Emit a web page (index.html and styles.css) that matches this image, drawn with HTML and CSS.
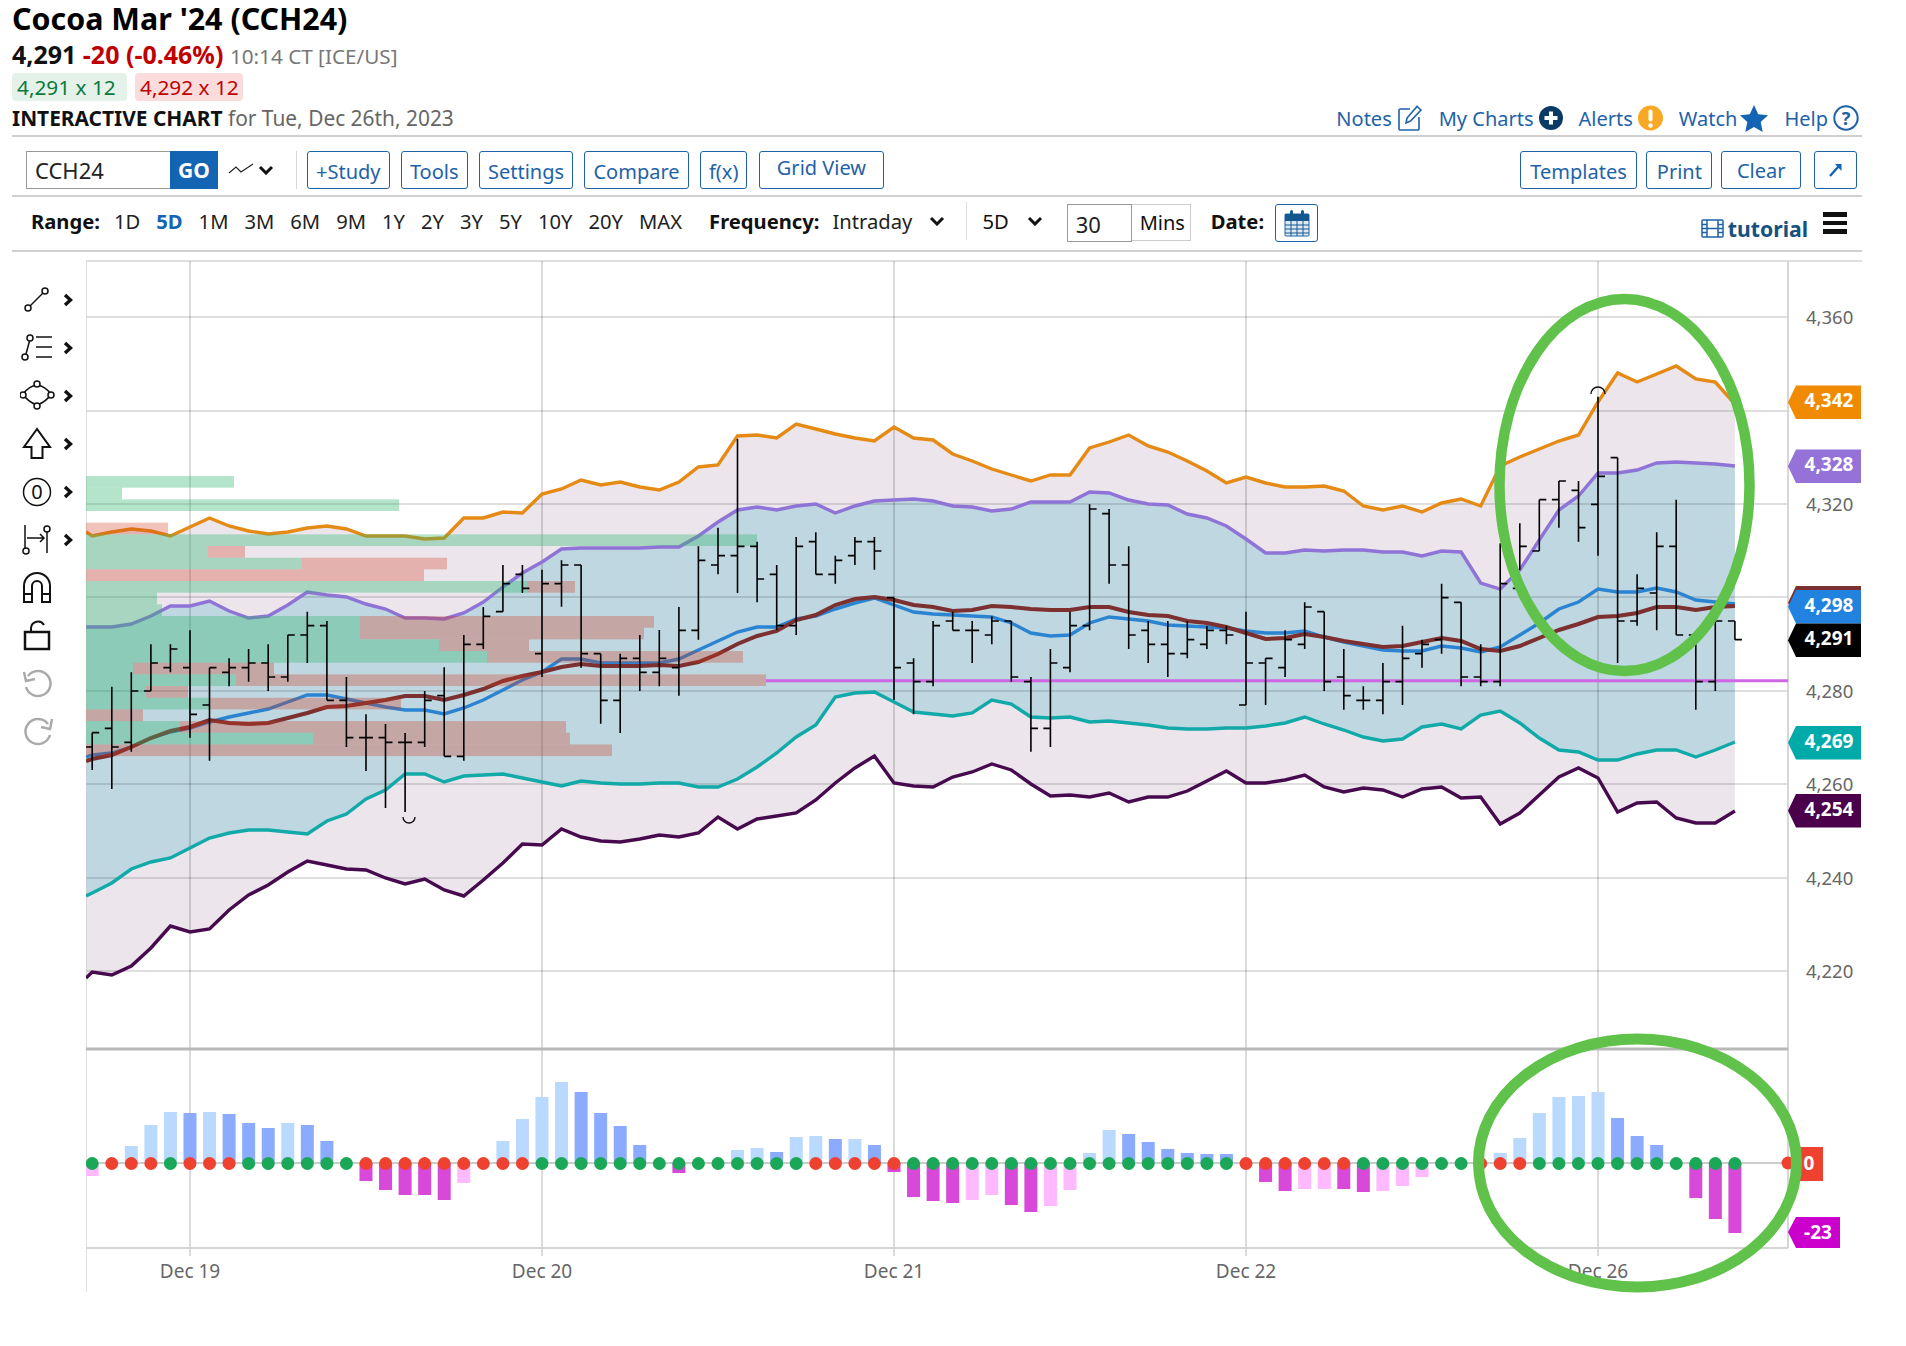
FILE: index.html
```html
<!DOCTYPE html>
<html lang="en">
<head>
    <meta charset="UTF-8">
    <title>Cocoa Mar '24 (CCH24)</title>
    <link rel="stylesheet" href="styles.css">
</head>
<body>

<div class="quote-head">
    <h1 class="symbol-title">Cocoa Mar '24 (CCH24)</h1>
    <div class="last-line">
        <b>4,291</b> <b class="down">-20 (-0.46%)</b> <span class="muted">10:14 CT [ICE/US]</span>
    </div>
    <div class="bid-ask">
        <span class="pill pill-bid">4,291 x 12</span>
        <span class="pill pill-ask">4,292 x 12</span>
    </div>
</div>

<div class="title-row">
    <div class="chart-title"><b>INTERACTIVE CHART</b> <span class="muted-dark">for Tue, Dec 26th, 2023</span></div>
    <div class="quick-links">
        <a class="quick-link">Notes
            <svg width="26" height="26" viewBox="0 0 26 26" fill="none" stroke="#1e62a8" stroke-width="1.6"><path d="M13 4H3.5A1.5 1.5 0 0 0 2 5.5v18A1.5 1.5 0 0 0 3.500 25h17a1.500 1.500 0 0 0 1.500-1.500V12"/><path d="M9 18l1-5L20 1.500l4 3.500-10.500 11z"/></svg>
        </a>
        <a class="quick-link">My Charts
            <svg width="24" height="24" viewBox="0 0 24 24"><circle cx="12" cy="12" r="12" fill="#0b3a66"/><path d="M12 5.500v13M5.500 12h13" stroke="#fff" stroke-width="4"/></svg>
        </a>
        <a class="quick-link">Alerts
            <svg width="25" height="26" viewBox="0 0 25 26"><circle cx="12.500" cy="13" r="12.500" fill="#f9a825"/><rect x="10.500" y="4.500" width="4" height="12" rx="2" fill="#fff"/><circle cx="12.500" cy="20.500" r="2.200" fill="#fff"/></svg>
        </a>
        <a class="quick-link quick-watch">Watch
            <svg width="28" height="27" viewBox="0 0 28 27"><path d="M14 0l4.200 9.300 9.800 1-7.300 6.700 2 10L14 22l-8.700 5 2-10L0 10.300l9.800-1z" fill="#1464b4"/></svg>
        </a>
        <a class="quick-link">Help
            <svg width="26" height="26" viewBox="0 0 26 26"><circle cx="13" cy="13" r="11.700" fill="none" stroke="#1e62a8" stroke-width="2"/><text class="help-mark" x="13" y="19.500">?</text></svg>
        </a>
    </div>
</div>

<div class="tool-row">
    <div class="symbol-box">
        <input class="symbol-input" type="text" value="CCH24">
        <button class="go-button">GO</button>
    </div>
    <div class="chart-type">
        <svg width="27" height="14" viewBox="0 0 27 14" fill="none" stroke="#222" stroke-width="1.200"><path d="M1 10l7-6 5 5L25 1"/></svg>
        <svg class="chevron" width="16" height="10" viewBox="0 0 16 10"><path d="M2 2l6 6 6-6"/></svg>
    </div>
    <div class="tool-sep"></div>
    <button class="tool-button">+Study</button>
    <button class="tool-button">Tools</button>
    <button class="tool-button">Settings</button>
    <button class="tool-button">Compare</button>
    <button class="tool-button">f(x)</button>
    <button class="tool-button grid-view">Grid View</button>
    <div class="tool-spacer"></div>
    <button class="tool-button tool-right">Templates</button>
    <button class="tool-button tool-right">Print</button>
    <button class="tool-button tool-clear">Clear</button>
    <button class="tool-button tool-expand">
        <svg width="17" height="17" viewBox="0 0 17 17"><path d="M3 15L11.500 5.500" fill="none" stroke="#1464b4" stroke-width="2.400"/><path d="M8 3h6.500v7z" fill="#1464b4"/></svg>
    </button>
</div>

<div class="range-row">
    <b class="range-label">Range:</b>
    <div class="range-items">
        <a>1D</a><a class="active">5D</a><a>1M</a><a>3M</a><a>6M</a><a>9M</a><a>1Y</a><a>2Y</a><a>3Y</a><a>5Y</a><a>10Y</a><a>20Y</a><a>MAX</a>
    </div>
    <b class="freq-label">Frequency:</b>
    <span class="freq-value">Intraday</span>
    <svg class="chevron freq-chevron" width="16" height="10" viewBox="0 0 16 10"><path d="M2 2l6 6 6-6"/></svg>
    <div class="range-sep"></div>
    <span class="freq-days">5D</span>
    <svg class="chevron days-chevron" width="16" height="10" viewBox="0 0 16 10"><path d="M2 2l6 6 6-6"/></svg>
    <input class="mins-input" type="text" value="30">
    <span class="mins-unit">Mins</span>
    <b class="date-label">Date:</b>
    <button class="date-button">
        <svg width="26" height="28" viewBox="0 0 26 28"><rect x="1" y="5" width="24" height="22" rx="1" fill="#dfe9f3" stroke="#1e62a8" stroke-width="1"/><rect x="1" y="5" width="24" height="7" fill="#14588f"/><rect x="6" y="1" width="3" height="7" rx="1.500" fill="#14588f"/><rect x="17" y="1" width="3" height="7" rx="1.500" fill="#14588f"/><path d="M1 16h24M1 20h24M1 24h24M7 12v15M13 12v15M19 12v15" stroke="#14588f" stroke-width="1"/></svg>
    </button>
    <div class="tool-spacer"></div>
    <a class="tutorial">
        <svg width="23" height="19" viewBox="0 0 23 19" fill="none" stroke="#1e62a8" stroke-width="1.500"><rect x="1" y="1" width="21" height="17" rx="1"/><path d="M6 1v17M17 1v17M1 5.500h5M1 9.500h5M1 13.500h5M17 5.500h5M17 9.500h5M17 13.500h5M6 9.500h11"/></svg>
        tutorial
    </a>
    <div class="hamburger"><i></i><i></i><i></i></div>
</div>

<div class="chart-area">
    <div class="draw-tools">
        <div class="draw-tool">
            <svg width="40" height="40" viewBox="0 0 40 40" fill="none" stroke="#111" stroke-width="1.500"><circle cx="8" cy="28" r="3"/><circle cx="25" cy="11" r="3"/><path d="M10 26l13-13"/></svg>
            <svg class="caret" width="10" height="14" viewBox="0 0 10 14"><path d="M2 2l5.500 5-5.500 5"/></svg>
        </div>
        <div class="draw-tool">
            <svg width="40" height="40" viewBox="0 0 40 40" fill="none" stroke="#111" stroke-width="1.500"><circle cx="5" cy="29" r="3"/><circle cx="10" cy="10" r="3"/><path d="M6 26l3.500-13M16 9h16M16 19h16M16 29h16"/></svg>
            <svg class="caret" width="10" height="14" viewBox="0 0 10 14"><path d="M2 2l5.500 5-5.500 5"/></svg>
        </div>
        <div class="draw-tool">
            <svg width="40" height="40" viewBox="0 0 40 40" fill="none" stroke="#111" stroke-width="1.500"><path d="M17 9c-6 1-11 5-14 9 3 5 8 9 14 11 6-2 11-6 14-11-3-4-8-8-14-9z"/><circle cx="17" cy="8" r="3" fill="#fff"/><circle cx="3" cy="19" r="3" fill="#fff"/><circle cx="31" cy="19" r="3" fill="#fff"/><circle cx="17" cy="30" r="3" fill="#fff"/></svg>
            <svg class="caret" width="10" height="14" viewBox="0 0 10 14"><path d="M2 2l5.500 5-5.500 5"/></svg>
        </div>
        <div class="draw-tool">
            <svg width="40" height="40" viewBox="0 0 40 40" fill="none" stroke="#111" stroke-width="2"><path d="M17 5L4 23h7.500v11h11V23H30z"/></svg>
            <svg class="caret" width="10" height="14" viewBox="0 0 10 14"><path d="M2 2l5.500 5-5.500 5"/></svg>
        </div>
        <div class="draw-tool">
            <svg width="40" height="40" viewBox="0 0 40 40" fill="none" stroke="#111" stroke-width="1.500"><circle cx="17" cy="20" r="13.500"/><text class="zero-mark" x="17" y="27">0</text></svg>
            <svg class="caret" width="10" height="14" viewBox="0 0 10 14"><path d="M2 2l5.500 5-5.500 5"/></svg>
        </div>
        <div class="draw-tool">
            <svg width="40" height="40" viewBox="0 0 40 40" fill="none" stroke="#111" stroke-width="1.500"><path d="M5 5v24M27 12v21M7 18h17M20 14l4 4-4 4"/><circle cx="6" cy="31" r="3"/><circle cx="27" cy="9" r="3"/></svg>
            <svg class="caret" width="10" height="14" viewBox="0 0 10 14"><path d="M2 2l5.500 5-5.500 5"/></svg>
        </div>
        <div class="draw-tool">
            <svg width="40" height="40" viewBox="0 0 40 40" fill="none" stroke="#111" stroke-width="2"><path d="M4 34V18a13 13 0 0 1 26 0v16h-8V18a5 5 0 0 0-10 0v16zM4 26h8M22 26h8"/></svg>
        </div>
        <div class="draw-tool">
            <svg width="40" height="40" viewBox="0 0 40 40" fill="none" stroke="#111" stroke-width="2"><rect x="5" y="16" width="24" height="17" stroke-width="2.500"/><path d="M11 16v-4a7 7 0 0 1 13-3"/></svg>
        </div>
        <div class="draw-tool">
            <svg width="40" height="40" viewBox="0 0 40 40" fill="none" stroke="#aaa" stroke-width="2.500"><path d="M8 12a12.500 12.500 0 1 1-2 11"/><path d="M4 8l2 9 9-2"/></svg>
        </div>
        <div class="draw-tool">
            <svg width="40" height="40" viewBox="0 0 40 40" fill="none" stroke="#aaa" stroke-width="2.500"><path d="M28 12a12.500 12.500 0 1 0 2 11"/><path d="M32 7l-2 10-9-2"/></svg>
        </div>
    </div>
    <svg class="chart" id="chart" width="1820" height="1086" viewBox="86 260 1820 1086"></svg>
</div>

<script src="chart.js"></script>
</body>
</html>
```

FILE: styles.css
```css
* {
    box-sizing: border-box;
}

body {
    margin: 0;
    font-family: "Noto Sans", "Open Sans", sans-serif;
    font-size: 20px;
    color: #111;
    background: #fff;
    width: 1906px;
    height: 1346px;
    overflow: hidden;
}

.quote-head {
    padding-left: 12px;
    height: 101px;
}

.symbol-title {
    margin: 0;
    height: 38px;
    font-size: 30.4px;
    line-height: 38px;
    font-weight: 700;
    color: #000;
}

.last-line {
    height: 35px;
    line-height: 32px;
    font-size: 25px;
    white-space: nowrap;
}

.last-line b {
    color: #111;
}

.last-line b.down {
    color: #c00000;
}

.muted {
    font-size: 20.7px;
    color: #777;
}

.muted-dark {
    color: #666;
}

.bid-ask {
    display: flex;
    gap: 8px;
}

.pill {
    display: block;
    height: 28px;
    line-height: 29px;
    padding: 0 4px 0 5px;
    border-radius: 4px;
    font-size: 20.8px;
}

.pill-bid {
    width: 115px;
    background: #e4f2ea;
    color: #0c7a3c;
}

.pill-ask {
    background: #fadcdc;
    color: #c00000;
}

.title-row {
    display: flex;
    justify-content: space-between;
    align-items: flex-end;
    height: 36px;
    margin: 0 44px 0 12px;
    padding-bottom: 3px;
    border-bottom: 2px solid #d0d0d0;
    font-size: 20.9px;
}

.chart-title {
    line-height: 28px;
    white-space: nowrap;
}

.quick-links {
    display: flex;
    gap: 16px;
    margin-right: 3px;
    font-size: 20px;
}

.quick-link {
    display: flex;
    align-items: center;
    gap: 5px;
    color: #1e62a8;
    height: 28px;
    white-space: nowrap;
}

.quick-watch {
    gap: 3px;
}

.help-mark {
    font: 700 18px "Noto Sans", sans-serif;
    fill: #1e62a8;
    text-anchor: middle;
}

.tool-row {
    display: flex;
    align-items: center;
    height: 60px;
    margin: 0 44px 0 12px;
    padding: 14px 5px 6px 14px;
    border-bottom: 2px solid #d0d0d0;
}

.symbol-box {
    display: flex;
    height: 38px;
}

.symbol-input {
    width: 144px;
    height: 38px;
    padding: 0 8px;
    border: 1px solid #999;
    border-right: none;
    font: 22px "Noto Sans", sans-serif;
    color: #222;
}

.go-button {
    width: 48px;
    height: 38px;
    padding: 0;
    border: none;
    background: #1464b4;
    color: #fff;
    font: 700 21px "Noto Sans", sans-serif;
}

.chart-type {
    display: flex;
    align-items: center;
    gap: 3px;
    width: 78px;
    padding-left: 10px;
}

.chevron path {
    fill: none;
    stroke: #111;
    stroke-width: 3;
}

.tool-sep {
    width: 1px;
    height: 38px;
    background: #d8d8d8;
    margin-right: 10px;
}

.tool-button {
    height: 38px;
    margin-right: 11.4px;
    padding: 2px 8px 0;
    border: 1px solid #1e62a8;
    border-radius: 3px;
    background: #fff;
    color: #1e62a8;
    font: 20px "Noto Sans", sans-serif;
}

.grid-view {
    padding: 0 17px 5px;
}

.tool-right {
    padding: 2px 9.5px 0;
    margin-right: 9px;
}

.tool-clear {
    padding: 0 14.5px;
    margin-right: 13px;
}

.tool-expand {
    width: 43px;
    margin-right: 0;
    padding: 0;
}

.tool-spacer {
    flex: 1;
}

.range-row {
    display: flex;
    align-items: center;
    height: 55px;
    margin: 0 44px 0 12px;
    padding: 0 15px 5px 19px;
    border-bottom: 2px solid #d0d0d0;
    white-space: nowrap;
    font-size: 20.2px;
}

.range-items {
    display: flex;
    gap: 16px;
    margin-left: 14px;
    color: #222;
}

.range-items a.active {
    color: #1464b4;
    font-weight: 700;
}

.freq-label {
    margin-left: 27px;
}

.freq-value {
    margin-left: 13px;
    color: #222;
}

.freq-chevron {
    margin-left: 17px;
}

.range-sep {
    width: 1px;
    height: 38px;
    margin-left: 21px;
    background: #e0e0e0;
}

.freq-days {
    margin-left: 15px;
}

.days-chevron {
    margin-left: 18px;
}

.mins-input {
    width: 65px;
    height: 38px;
    margin-left: 24px;
    margin-top: 3px;
    padding: 2px 8px 0;
    border: 1px solid #999;
    font: 22px "Noto Sans", sans-serif;
    color: #222;
}

.mins-unit {
    width: 59px;
    height: 37px;
    line-height: 35px;
    margin-top: 3px;
    padding-left: 8px;
    border: 1px solid #ccc;
    border-left: none;
    font-size: 20px;
}

.date-label {
    margin-left: 20px;
}

.date-button {
    width: 43px;
    height: 38px;
    margin-left: 11px;
    margin-top: 3px;
    padding: 4px 0 0;
    border: 1px solid #1e62a8;
    border-radius: 3px;
    background: #fff;
}

.tutorial {
    display: flex;
    align-items: center;
    gap: 4px;
    margin-top: 14px;
    font-size: 21.2px;
    font-weight: 700;
    color: #14527f;
}

.hamburger {
    display: flex;
    flex-direction: column;
    gap: 4px;
    margin-left: 15px;
    margin-top: 4px;
}

.hamburger i {
    display: block;
    width: 24px;
    height: 4.5px;
    background: #111;
}

.chart-area {
    display: flex;
    padding-top: 8px;
}

.draw-tools {
    width: 86px;
    padding: 16px 0 0 20px;
}

.draw-tool {
    display: flex;
    align-items: center;
    height: 48px;
}

.caret {
    margin-left: 3px;
}

.caret path {
    fill: none;
    stroke: #111;
    stroke-width: 3.4;
}

.zero-mark {
    font: 20px "Noto Sans", sans-serif;
    fill: #111;
    stroke: none;
    text-anchor: middle;
}

.chart {
    display: block;
}

.axis-label {
    font: 18.5px "Noto Sans", sans-serif;
    fill: #666;
}

.price-tag {
    font: 700 19px "Noto Sans", sans-serif;
    fill: #fff;
    text-anchor: middle;
}

.date-tick {
    font: 19px "Noto Sans", sans-serif;
    fill: #666;
    text-anchor: middle;
}
```

FILE: chart.js
```js
const svg = document.getElementById('chart');
const NS = 'http://www.w3.org/2000/svg';

// x of bar i: 18 half hour bars a day, 352px per day
const barX = i => 92.2 + 19.556 * i;

const plotLeft = 86;
const plotRight = 1788;
const zeroY = 1163;

// y of every line per bar, in page pixels
const orange = [536,532,529,531,536,527,518,526,531,534,532,528,526,529,536,536,536,539,538,518,518,512,513,494,489,480,485,482,487,490,
    482,467,465,436,435,438,424,429,434,438,441,427,438,440,454,461,469,475,481,475,475,448,442,435,446,452,461,471,483,477,483,487,
    487,486,491,506,510,506,512,503,499,506,466,457,449,441,435,402,373,382,374,366,379,382,404];
const purple = [627,627,624,616,606,606,601,611,618,616,605,592,595,597,604,609,618,618,619,613,602,587,573,562,549,548,548,548,548,547,
    547,536,522,510,507,510,506,504,513,506,501,500,499,501,506,507,511,509,502,502,502,492,493,500,504,505,514,518,526,539,553,553,
    550,551,550,550,552,552,556,551,552,583,589,570,540,510,496,473,473,470,463,462,463,464,466];
const blue = [755,753,747,738,732,728,722,717,713,709,702,695,695,699,703,707,710,710,714,708,700,690,680,672,659,659,663,663,663,663,
    659,650,641,632,627,627,619,616,609,603,598,605,612,614,615,616,617,623,633,636,635,623,617,619,621,625,626,627,628,631,633,633,
    631,637,642,646,650,651,651,646,648,652,647,635,623,609,602,589,592,592,588,592,600,602,604];
const maroon = [759,755,747,738,731,727,720,723,724,723,718,713,707,706,703,700,696,696,700,695,689,681,676,672,667,664,666,666,666,665,
    666,662,654,644,636,631,620,615,605,599,597,600,605,607,611,610,606,607,609,610,610,607,607,612,615,616,621,623,627,633,639,638,
    634,637,641,644,647,646,642,638,641,649,651,646,638,630,624,617,616,613,607,607,610,607,606];
const teal = [893,883,869,862,858,848,838,833,830,830,832,834,821,814,799,790,774,774,782,776,775,774,778,782,786,781,783,784,784,783,783,787,787,779,
    767,753,737,725,697,693,692,702,712,714,716,713,700,704,717,718,717,722,721,723,725,728,729,729,728,728,726,723,
    717,724,730,737,741,739,727,724,729,715,711,723,738,750,752,760,760,754,750,750,757,750,742];
const plum = [972,975,966,948,926,932,929,910,895,885,872,861,865,869,870,878,884,879,890,896,880,863,844,845,829,837,841,842,839,835,837,833,817,829,819,816,813,800,783,768,756,783,786,787,
    777,772,764,770,784,796,795,797,793,802,797,797,791,781,771,783,783,780,775,787,792,788,790,797,789,787,798,797,824,813,795,777,768,778,812,803,802,818,823,823,811];

// line value where it meets the left edge of the plot
const startY = { orange: 532, purple: 627, blue: 757, maroon: 761, teal: 896, plum: 978 };

// [high, low, open, close], measured in thirds of a pixel below the plot top
const bars = [
    [1418,1530,1461,1418],[1280,1587,1405,1461],[1237,1475,1447,1293],[1153,1293,1293,1209],[1153,1237,1223,1167],
    [1111,1433,1223,1363],[1223,1502,1335,1223],[1195,1279,1237,1223],[1167,1265,1223,1209],[1153,1293,1209,1251],
    [1125,1265,1251,1125],[1055,1209,1125,1097],[1083,1321,1097,1321],[1251,1461,1321,1433],[1363,1533,1433,1433],
    [1392,1644,1433,1447],[1419,1656,1447,1447],[1293,1461,1447,1321],[1222,1489,1307,1489],[1125,1502,1489,1153],
    [1041,1167,1153,1069],[915,1055,1055,971],[915,999,943,985],[929,1251,1181,971],[901,1040,971,915],
    [915,1223,915,1181],[1181,1391,1181,1321],[1181,1419,1321,1195],[1125,1293,1195,1237],[1110,1279,1237,1195],
    [1041,1307,1223,1111],[859,1139,1111,901],[803,943,915,887],[537,999,887,859],[845,1027,859,957],
    [915,1111,943,1097],[831,1125,1097,859],[817,943,845,943],[887,971,943,901],[831,915,887,845],
    [831,929,845,873],[1013,1320,1013,1223],[1195,1363,1209,1265],[1083,1279,1265,1097],[1055,1111,1083,1111],
    [1083,1209,1111,1111],[1069,1153,1125,1083],[1083,1265,1083,1251],[1251,1475,1265,1405],[1167,1461,1405,1209],
    [1055,1237,1223,1097],[733,1111,1097,747],[747,971,761,915],[859,1167,915,1125],[1083,1209,1111,1153],
    [1083,1251,1153,1181],[1083,1195,1181,1139],[1097,1167,1153,1111],[1097,1153,1111,1125],[1055,1335,1335,1209],
    [1195,1335,1209,1195],[1111,1251,1223,1139],[1027,1167,1153,1041],[1055,1293,1055,1265],[1167,1349,1251,1307],
    [1279,1349,1321,1321],[1209,1363,1321,1265],[1097,1335,1265,1195],[1139,1223,1181,1153],[971,1181,1139,1013],
    [1027,1279,1027,1251],[1153,1279,1251,1265],[850,1279,1265,971],[790,930,985,859],[719,873,873,719],
    [663,803,719,663],[663,845,691,803],[410,887,733,649],[593,1209,593,1083],[943,1097,1083,985],
    [817,1111,999,859],[719,1125,859,1125],[1125,1349,1125,1265],[1083,1293,1265,1083],[1083,1139,1083,1139]
];
const barY = v => 260 + v / 3;

// volume profile rows from the left edge: [row, green end, red end]
const profile = [
    [0,234,0],[1,122,0],[2,399,0],[4,86,168],[5,757,0],[6,208,245],[7,302,447],[8,86,424],[9,527,575],
    [10,157,0],[11,162,0],[12,360,654],[13,360,644],[14,439,529],[15,487,743],[16,133,274],[17,236,766],
    [18,146,188],[19,210,401],[20,86,143],[21,180,566],[22,313,570],[23,86,612]
];

// squeeze histogram: colour letter + y of the bar end, '' for none
const hist = ['p1176','','l1146','l1125','l1112','m1113','l1112','m1114','m1123','m1128','l1123','m1125','m1141','',
    'd1181','d1190','d1195','d1195','d1200','p1183','','l1141','l1119','l1097','l1082','m1092','m1113','m1126','m1145','',
    'd1173','','','l1150','l1148','m1152','l1137','l1136','m1139','l1139','m1145','d1172','d1197','d1201','d1203','p1200',
    'p1195','d1205','d1212','p1206','p1190','l1153','l1130','m1134','m1142','m1149','m1153','m1154','m1154','',
    'd1182','d1191','p1189','p1189','d1189','d1192','p1191','p1186','p1177','','','','l1153','l1138','l1113','l1097',
    'l1096','l1092','m1118','m1136','m1145','','d1198','d1219','d1233'];
const histColors = { l: '#b9d9ff', m: '#8aabff', p: '#ffb9ff', d: '#d949d9' };
const dots = 'grrrgrrrggggggrrrrrrrrrggggggggggggggrrrrrgggggggggggggggggrrrrrrggggggrrrggggggggggg';

function add(tag, attrs, text) {
    const el = document.createElementNS(NS, tag);
    for (const key in attrs) el.setAttribute(key, attrs[key]);
    if (text) el.textContent = text;
    svg.appendChild(el);
    return el;
}

function linePoints(ys, start) {
    const pts = [plotLeft + ',' + start];
    ys.forEach((y, i) => pts.push(barX(i).toFixed(1) + ',' + y));
    return pts;
}

function band(top, bottom, topStart, bottomStart, fill) {
    const pts = linePoints(top, topStart).concat(linePoints(bottom, bottomStart).reverse());
    add('polygon', { points: pts.join(' '), fill: fill });
}

function line(ys, start, color, width) {
    add('polyline', { points: linePoints(ys, start).join(' '), fill: 'none', stroke: color, 'stroke-width': width, 'stroke-linejoin': 'miter' });
}

function priceTag(y, text, color) {
    const h = 33.5;
    add('polygon', {
        points: `1788,${y + h / 2} 1796,${y} 1861,${y} 1861,${y + h} 1796,${y + h}`,
        fill: color
    });
    add('text', { class: 'price-tag', x: 1829, y: y + 21.5 }, text);
}

// bands first, the grid shows through them
band(orange, plum, startY.orange, startY.plum, '#ece6ec');
band(purple, teal, startY.purple, startY.teal, '#bfd7e0');

const gridColor = 'rgba(0,0,0,0.17)';
[317, 411, 504, 597, 691, 784, 878, 971].forEach(y => {
    add('line', { x1: plotLeft, x2: plotRight, y1: y, y2: y, stroke: gridColor, 'stroke-width': 1.7 });
});
add('line', { x1: plotLeft, x2: 1862, y1: 261, y2: 261, stroke: '#d4d4d4', 'stroke-width': 1.7 });
[190, 542, 894, 1246, 1598].forEach(x => {
    add('line', { x1: x, x2: x, y1: 261, y2: 1256, stroke: gridColor, 'stroke-width': 1.7 });
});
add('line', { x1: plotLeft, x2: plotLeft, y1: 261, y2: 1292, stroke: '#ccc', 'stroke-width': 1.2 });
add('line', { x1: plotRight, x2: plotRight, y1: 261, y2: 1248, stroke: '#d0d0d0', 'stroke-width': 1.7 });
add('line', { x1: plotLeft, x2: plotRight, y1: 1049, y2: 1049, stroke: '#b8b8b8', 'stroke-width': 3 });
add('line', { x1: plotLeft, x2: plotRight, y1: 1248, y2: 1248, stroke: '#d4d4d4', 'stroke-width': 2 });

line(orange, startY.orange, '#e58a14', 3.4);
line(purple, startY.purple, '#8f73d6', 3.4);
line(teal, startY.teal, '#12a9a9', 3.4);
line(plum, startY.plum, '#470a4f', 3.4);
line(blue, startY.blue, '#2a84d2', 3.4);
line(maroon, startY.maroon, '#7c3030', 4);

// volume profile sits over the lines
profile.forEach(([row, green, red]) => {
    const y = 476 + row * 11.67;
    if (green > plotLeft) add('rect', { x: plotLeft, y: y, width: green - plotLeft, height: 11.67, fill: 'rgba(46,184,110,0.36)' });
    if (red) add('rect', { x: Math.max(green, plotLeft), y: y, width: red - Math.max(green, plotLeft), height: 11.67, fill: 'rgba(210,55,30,0.3)' });
});
add('line', { x1: 766, x2: plotRight, y1: 680.7, y2: 680.7, stroke: '#cf66e4', 'stroke-width': 3 });

// OHLC bars
let barPath = '';
bars.forEach(([high, low, open, close], i) => {
    const x = barX(i).toFixed(1);
    barPath += `M${x} ${barY(high)}V${barY(low)}`;
    barPath += `M${x} ${barY(open)}h-7M${x} ${barY(close)}h7`;
});
add('path', { d: barPath, fill: 'none', stroke: '#000', 'stroke-width': 1.6 });

// high and low markers
add('path', { d: 'M1591 394a7 7 0 0 1 14 0', fill: 'none', stroke: '#111', 'stroke-width': 1.4 });
add('path', { d: 'M403 817a6 6 0 0 0 12 0', fill: 'none', stroke: '#111', 'stroke-width': 1.4 });

// price axis
[[4360, 317], [4320, 504], [4280, 691], [4260, 784], [4240, 878], [4220, 971]].forEach(([p, y]) => {
    add('text', { class: 'axis-label', x: 1806, y: y + 6.500 }, p.toLocaleString('en-US'));
});

priceTag(385.5, '4,342', '#f08a00');
priceTag(449.5, '4,328', '#9472d8');
priceTag(586, '', '#7c3030');
priceTag(590, '4,298', '#2282e0');
priceTag(623.5, '4,291', '#000');
priceTag(726, '4,269', '#00aaa8');
priceTag(794, '4,254', '#4a004a');

// lower panel
add('line', { x1: plotLeft, x2: plotRight, y1: zeroY, y2: zeroY, stroke: '#ccc', 'stroke-width': 2 });
hist.forEach((bar, i) => {
    if (!bar) return;
    const y = parseInt(bar.slice(1));
    add('rect', {
        x: barX(i) - 6.500,
        y: Math.min(y, zeroY),
        width: 13,
        height: Math.abs(y - zeroY),
        fill: histColors[bar[0]]
    });
});
dots.split('').forEach((d, i) => {
    add('ellipse', { cx: barX(i), cy: zeroY + 0.5, rx: 6.500, ry: 6.500, fill: d === 'g' ? '#1aa858' : '#ee4130' });
});
add('circle', { cx: plotRight, cy: zeroY, r: 6.500, fill: '#ee4130' });
add('rect', { x: 1796, y: 1147, width: 27, height: 34, fill: '#ee4130' });
add('text', { class: 'price-tag', x: 1809, y: 1170 }, '0');
add('polygon', { points: '1788,1232 1796,1217 1840,1217 1840,1248 1796,1248', fill: '#cc00cc' });
add('text', { class: 'price-tag', x: 1818, y: 1239 }, '-23');

[['Dec 19', 190], ['Dec 20', 542], ['Dec 21', 894], ['Dec 22', 1246], ['Dec 26', 1598]].forEach(([label, x]) => {
    add('text', { class: 'date-tick', x: x, y: 1278 }, label);
});

// hand drawn circles on top of everything
add('ellipse', { cx: 1624.5, cy: 485, rx: 125, ry: 186, fill: 'none', stroke: '#60c24a', 'stroke-width': 10.5 });
add('ellipse', { cx: 1637.5, cy: 1163, rx: 159, ry: 124, fill: 'none', stroke: '#60c24a', 'stroke-width': 11 });
```
